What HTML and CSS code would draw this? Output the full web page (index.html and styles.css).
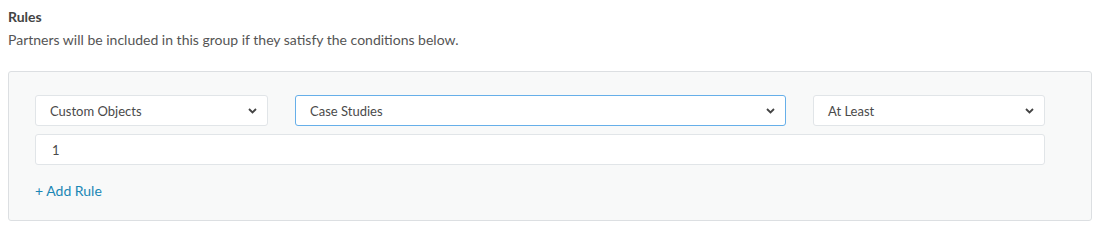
FILE: index.html
```html
<!DOCTYPE html>
<html>
<head>
<meta charset="utf-8">
<link rel="stylesheet" href="styles.css">
</head>
<body>
<div class="section">
  <div class="title">Rules</div>
  <div class="subtitle">Partners will be included in this group if they satisfy the conditions below.</div>
  <div class="panel">
    <div class="row">
      <div class="select"><span>Custom Objects</span><svg class="chev" width="9" height="6" viewBox="0 0 9 6"><path d="M1 1 L4.5 4.5 L8 1" fill="none" stroke="#444" stroke-width="1.8"/></svg></div>
      <div class="select focus"><span>Case Studies</span><svg class="chev" width="9" height="6" viewBox="0 0 9 6"><path d="M1 1 L4.5 4.5 L8 1" fill="none" stroke="#444" stroke-width="1.8"/></svg></div>
      <div class="select"><span>At Least</span><svg class="chev" width="9" height="6" viewBox="0 0 9 6"><path d="M1 1 L4.5 4.5 L8 1" fill="none" stroke="#444" stroke-width="1.8"/></svg></div>
    </div>
    <div class="input">1</div>
    <a class="add">+ Add Rule</a>
  </div>
</div>
</body>
</html>
```
FILE: styles.css
```css
body {
  margin: 8px;
  font-family: Lato, "Open Sans", sans-serif;
  color: #444;
  background: #fff;
}
.title {
  font-size: 14px;
  font-weight: bold;
  color: #444;
  line-height: 18px;
  margin-top: 0;
}
.subtitle {
  font-size: 14px;
  color: #555;
  line-height: 20px;
  margin-top: 4px;
}
.panel {
  margin-top: 21px;
  border: 1px solid #dcdfe2;
  border-radius: 3px;
  background: #f8f9f9;
  padding: 23px 46px 19px 26px;
}
.row {
  display: grid;
  grid-template-columns: 233px 491px 1fr;
  column-gap: 27px;
}
.select, .input {
  box-sizing: border-box;
  height: 31px;
  background: #fff;
  border: 1px solid #e1e5e8;
  border-radius: 3px;
  font-size: 13px;
  color: #4a4a4a;
  display: flex;
  align-items: center;
}
.select {
  justify-content: space-between;
  padding: 0 10px 0 14px;
}
.select.focus {
  border-color: #66afe9;
}
.chev {
  display: block;
}
.input {
  margin-top: 8px;
  padding-left: 16px;
}
.add {
  display: inline-block;
  margin-top: 16px;
  font-size: 14px;
  color: #1a87b5;
  line-height: 20px;
}
```
